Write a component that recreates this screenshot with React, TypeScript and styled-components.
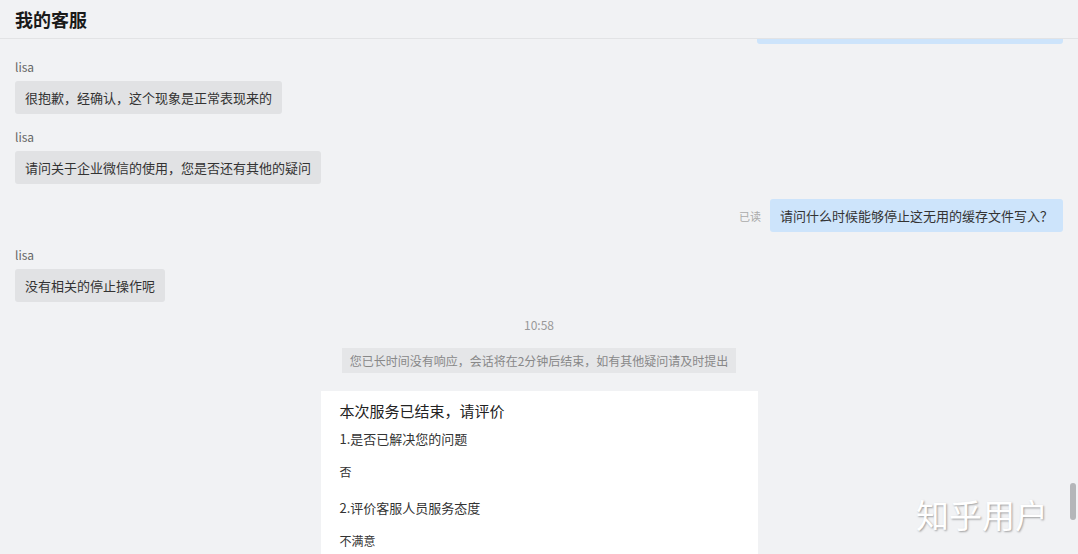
import styled, { createGlobalStyle } from "styled-components";

const GlobalStyle = createGlobalStyle`
  html, body {
    margin: 0;
    padding: 0;
    background: #f1f2f4;
  }
  body {
    font-family: "Noto Sans CJK SC", "Noto Sans", sans-serif;
    color: #333;
  }
`;

type Msg =
  | { kind: "in"; name: string; text: string }
  | { kind: "out"; text: string; read?: boolean }
  | { kind: "time"; text: string }
  | { kind: "notice"; text: string };

const messages: Msg[] = [
  { kind: "out", text: "那为什么企业微信会一直写入这么多的缓存文件？" },
  { kind: "in", name: "lisa", text: "很抱歉，经确认，这个现象是正常表现来的" },
  { kind: "in", name: "lisa", text: "请问关于企业微信的使用，您是否还有其他的疑问" },
  { kind: "out", text: "请问什么时候能够停止这无用的缓存文件写入？", read: true },
  { kind: "in", name: "lisa", text: "没有相关的停止操作呢" },
  { kind: "time", text: "10:58" },
  {
    kind: "notice",
    text: "您已长时间没有响应，会话将在2分钟后结束，如有其他疑问请及时提出",
  },
];

const rating = [
  { q: "1.是否已解决您的问题", a: "否" },
  { q: "2.评价客服人员服务态度", a: "不满意" },
];

export default function App() {
  return (
    <>
      <GlobalStyle />
      <Page>
        <Header>
          <Title>我的客服</Title>
        </Header>
        <Body>
          <List>
            {messages.map((m, i) => {
              if (m.kind === "in")
                return (
                  <Incoming key={i}>
                    <Name>{m.name}</Name>
                    <Bubble>{m.text}</Bubble>
                  </Incoming>
                );
              if (m.kind === "out")
                return (
                  <Outgoing key={i}>
                    {m.read && <ReadMark>已读</ReadMark>}
                    <Bubble $mine>{m.text}</Bubble>
                  </Outgoing>
                );
              if (m.kind === "time") return <Time key={i}>{m.text}</Time>;
              return (
                <NoticeRow key={i}>
                  <Notice>{m.text}</Notice>
                </NoticeRow>
              );
            })}
            <Card>
              <CardTitle>本次服务已结束，请评价</CardTitle>
              {rating.map((r, i) => (
                <div key={i}>
                  <Question $first={i === 0}>{r.q}</Question>
                  <Answer>{r.a}</Answer>
                </div>
              ))}
            </Card>
          </List>
        </Body>
        <ScrollThumb />
        <Watermark>知乎用户</Watermark>
      </Page>
    </>
  );
}

const Page = styled.div`
  position: relative;
  height: 100vh;
  display: flex;
  flex-direction: column;
  overflow: hidden;
`;

const Header = styled.header`
  height: 38px;
  flex-shrink: 0;
  display: flex;
  align-items: center;
  padding: 0 15px;
  border-bottom: 1px solid #e2e3e5;
  position: relative;
  z-index: 1;
  background: #f1f2f4;
`;

const Title = styled.h1`
  margin: 0;
  font-size: 18px;
  font-weight: 700;
  color: #1a1a1a;
  line-height: 24px;
`;

const Body = styled.main`
  flex: 1;
  overflow: hidden;
`;

/* the list is scrolled: the first bubble sits mostly under the header */
const List = styled.div`
  display: flex;
  flex-direction: column;
  gap: 15px;
  padding: 0 15px;
  margin-top: -28px;
`;

const Incoming = styled.div`
  display: flex;
  flex-direction: column;
  align-items: flex-start;
`;

const Name = styled.div`
  font-size: 12px;
  line-height: 16px;
  color: #666;
  margin-bottom: 6px;
`;

const Bubble = styled.div<{ $mine?: boolean }>`
  font-size: 13px;
  line-height: 19px;
  padding: 7px 10px;
  border-radius: 3px;
  color: #333;
  background: ${(p) => (p.$mine ? "#cde4fb" : "#e1e2e4")};
`;

const Outgoing = styled.div`
  display: flex;
  justify-content: flex-end;
  align-items: center;
  gap: 9px;
`;

const ReadMark = styled.span`
  font-size: 11px;
  color: #aaa;
`;

const Time = styled.div`
  text-align: center;
  font-size: 12px;
  line-height: 16px;
  color: #999;
`;

const NoticeRow = styled.div`
  display: flex;
  justify-content: center;
`;

const Notice = styled.div`
  font-size: 12px;
  line-height: 25px;
  padding: 0 8px;
  color: #888;
  background: #e5e6e8;
`;

const Card = styled.div`
  align-self: center;
  width: 437px;
  box-sizing: border-box;
  margin-top: 3px;
  padding: 10px 19px 20px;
  background: #fff;
`;

const CardTitle = styled.div`
  font-size: 15px;
  line-height: 20px;
  color: #222;
`;

const Question = styled.div<{ $first?: boolean }>`
  font-size: 13px;
  line-height: 20px;
  margin-top: ${(p) => (p.$first ? "8px" : "16px")};
`;

const Answer = styled.div`
  font-size: 12px;
  line-height: 20px;
  margin-top: 13px;
`;

const ScrollThumb = styled.div`
  position: absolute;
  right: 2px;
  top: 483px;
  width: 6px;
  height: 37px;
  border-radius: 3px;
  background: #b4b6b9;
`;

const Watermark = styled.div`
  position: absolute;
  right: 30px;
  bottom: 20px;
  font-size: 33px;
  line-height: 40px;
  color: #fff;
  text-shadow: 1px 1px 2px rgba(0, 0, 0, 0.35);
  pointer-events: none;
`;
